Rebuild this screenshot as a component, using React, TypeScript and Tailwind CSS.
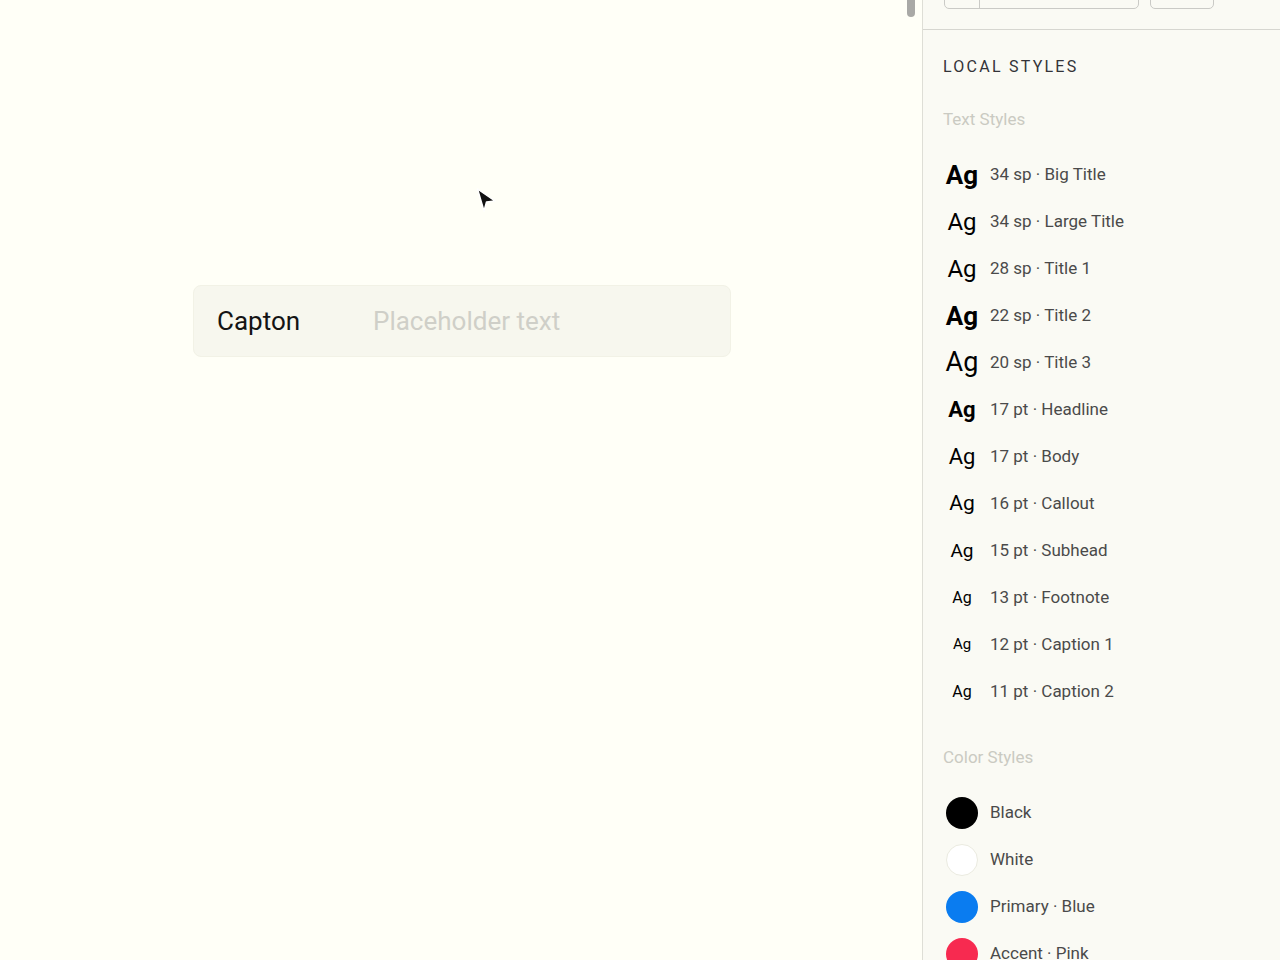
const textStyles = [
  { size: 'sp', pt: 34, name: 'Big Title', cls: 'text-[26px] font-bold' },
  { size: 'sp', pt: 34, name: 'Large Title', cls: 'text-[24px]' },
  { size: 'sp', pt: 28, name: 'Title 1', cls: 'text-[24px]' },
  { size: 'sp', pt: 22, name: 'Title 2', cls: 'text-[26px] font-bold' },
  { size: 'sp', pt: 20, name: 'Title 3', cls: 'text-[27px]' },
  { size: 'pt', pt: 17, name: 'Headline', cls: 'text-[22px] font-bold' },
  { size: 'pt', pt: 17, name: 'Body', cls: 'text-[22px]' },
  { size: 'pt', pt: 16, name: 'Callout', cls: 'text-[21px]' },
  { size: 'pt', pt: 15, name: 'Subhead', cls: 'text-[19px]' },
  { size: 'pt', pt: 13, name: 'Footnote', cls: 'text-[16px]' },
  { size: 'pt', pt: 12, name: 'Caption 1', cls: 'text-[15px]' },
  { size: 'pt', pt: 11, name: 'Caption 2', cls: 'text-[16px]' },
];

const colorStyles = [
  { name: 'Black', cls: 'bg-black' },
  { name: 'White', cls: 'bg-white border border-[#ebebe0]' },
  { name: 'Primary · Blue', cls: 'bg-[#0a7cf0]' },
  { name: 'Accent · Pink', cls: 'bg-[#f72a50]' },
];

function Cursor() {
  return (
    <svg className="absolute left-[474px] top-[186px]" width="26" height="30" viewBox="0 0 26 30">
      <path d="M3.5 3 L21 15 L12.5 16 L10 25 Z" fill="#111" stroke="#fff" strokeWidth="1.5" strokeLinejoin="round" />
    </svg>
  );
}

export default function App() {
  return (
    <div className="flex h-[960px] w-[1280px] overflow-hidden bg-[#fffff7] font-['Roboto',sans-serif]">
      {/* Canvas */}
      <main className="relative flex-1 pl-[193px] pt-[285px]">
        <div className="absolute right-[7px] top-0 h-[17px] w-[8px] rounded-b-full bg-[#a9a9a6]" />
        <Cursor />
        <div className="flex h-[72px] w-[538px] items-center rounded-[8px] border border-[#f2f2e6] bg-[#f7f7ee] pl-[23px]">
          <span className="w-[156px] text-[26px] text-[#141414]">Capton</span>
          <span className="text-[26px] text-[#cfcfc8]">Placeholder text</span>
        </div>
      </main>

      {/* Styles panel */}
      <aside className="flex w-[358px] shrink-0 flex-col border-l border-[#deded6] bg-[#fafaf4]">
        <div className="flex h-[30px] shrink-0 items-end gap-[11px] overflow-hidden border-b border-[#d6d6d0] pb-[20px] pl-[21px]">
          <div className="flex h-[30px] w-[195px] shrink-0 rounded-b-[5px] border border-[#cacac6]">
            <div className="w-[35px] border-r border-[#cacac6]" />
          </div>
          <div className="h-[30px] w-[64px] shrink-0 rounded-b-[5px] border border-[#cacac6]" />
        </div>

        <div className="flex shrink-0 flex-col px-[20px]">
          <h2 className="mt-[27px] text-[16px] leading-[20px] tracking-[0.14em] text-[#333338]">LOCAL STYLES</h2>

          <p className="mt-[32px] text-[17px] leading-[20px] text-[#cacac2]">Text Styles</p>
          <ul className="mt-[22px] flex flex-col">
            {textStyles.map((style) => (
              <li key={style.name} className="flex h-[47px] shrink-0 items-center">
                <span className={`ml-[3px] flex w-[32px] justify-center leading-none text-black ${style.cls}`}>Ag</span>
                <span className="ml-[12px] text-[17px] text-[#4a4a4a]">
                  {style.pt} {style.size} · {style.name}
                </span>
              </li>
            ))}
          </ul>

          <p className="mt-[32px] text-[17px] leading-[20px] text-[#cacac2]">Color Styles</p>
          <ul className="mt-[22px] flex flex-col">
            {colorStyles.map((color) => (
              <li key={color.name} className="flex h-[47px] shrink-0 items-center">
                <span className={`ml-[3px] h-[32px] w-[32px] shrink-0 rounded-full ${color.cls}`} />
                <span className="ml-[12px] text-[17px] text-[#4a4a4a]">{color.name}</span>
              </li>
            ))}
          </ul>
        </div>
      </aside>
    </div>
  );
}
